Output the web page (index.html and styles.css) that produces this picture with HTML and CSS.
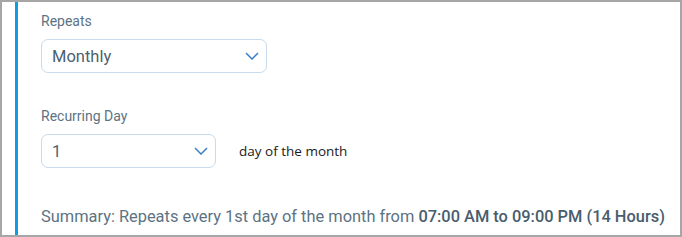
FILE: index.html
```html
<!DOCTYPE html>
<html lang="en">
<head>
    <meta charset="UTF-8">
    <meta name="viewport" content="width=device-width, initial-scale=1.0">
    <title>Recurrence</title>
    <link rel="stylesheet" href="styles.css">
</head>
<body>
    <div class="frame">
        <div class="panel">
            <div class="field">
                <label class="field-label">Repeats</label>
                <div class="select select-wide">
                    <span class="select-value">Monthly</span>
                    <svg class="chevron" width="14" height="8" viewBox="0 0 14 8"><path d="M1 1l6 6 6-6" fill="none" stroke="#3a7fc8" stroke-width="1.5"/></svg>
                </div>
            </div>

            <div class="field">
                <label class="field-label">Recurring Day</label>
                <div class="field-row">
                    <div class="select select-narrow">
                        <span class="select-value">1</span>
                        <svg class="chevron" width="14" height="8" viewBox="0 0 14 8"><path d="M1 1l6 6 6-6" fill="none" stroke="#3a7fc8" stroke-width="1.5"/></svg>
                    </div>
                    <span class="suffix">day of the month</span>
                </div>
            </div>

            <p class="summary">Summary: Repeats every 1st day of the month from <strong>07:00 AM to 09:00 PM (14 Hours)</strong></p>
        </div>
    </div>
</body>
</html>
```

FILE: styles.css
```css
body {
    margin: 0;
    padding: 0;
    background: #ffffff;
    font-family: Roboto, 'Liberation Sans', sans-serif;
}

.frame {
    width: 682px;
    height: 237px;
    box-sizing: border-box;
    border: 2px solid #a6a6a6;
    padding-left: 13px;
    background: #ffffff;
}

.panel {
    height: 100%;
    box-sizing: border-box;
    border-left: 3px solid #0d9de3;
    padding: 11px 0 0 23px;
}

.field {
    margin-bottom: 35px;
}

.field-label {
    display: block;
    font-size: 14px;
    line-height: 16px;
    color: #5d7383;
    margin-bottom: 10px;
}

.field-row {
    display: flex;
    align-items: center;
}

.select {
    display: flex;
    align-items: center;
    justify-content: space-between;
    height: 34px;
    box-sizing: border-box;
    border: 1px solid #c9daea;
    border-radius: 7px;
    padding: 0 7px 0 10px;
}

.select-wide {
    width: 226px;
}

.select-narrow {
    width: 175px;
}

.select-value {
    font-size: 16.5px;
    color: #4c6070;
}

.chevron {
    display: block;
}

.suffix {
    margin-left: 23px;
    font-family: 'Open Sans', 'Liberation Sans', sans-serif;
    font-size: 13.5px;
    color: #1a1a1a;
}

.summary {
    margin: 40px 0 0 0;
    font-size: 16.4px;
    line-height: 18px;
    color: #5d7383;
}

.summary strong {
    font-weight: 500;
    color: #485d6d;
}
```
